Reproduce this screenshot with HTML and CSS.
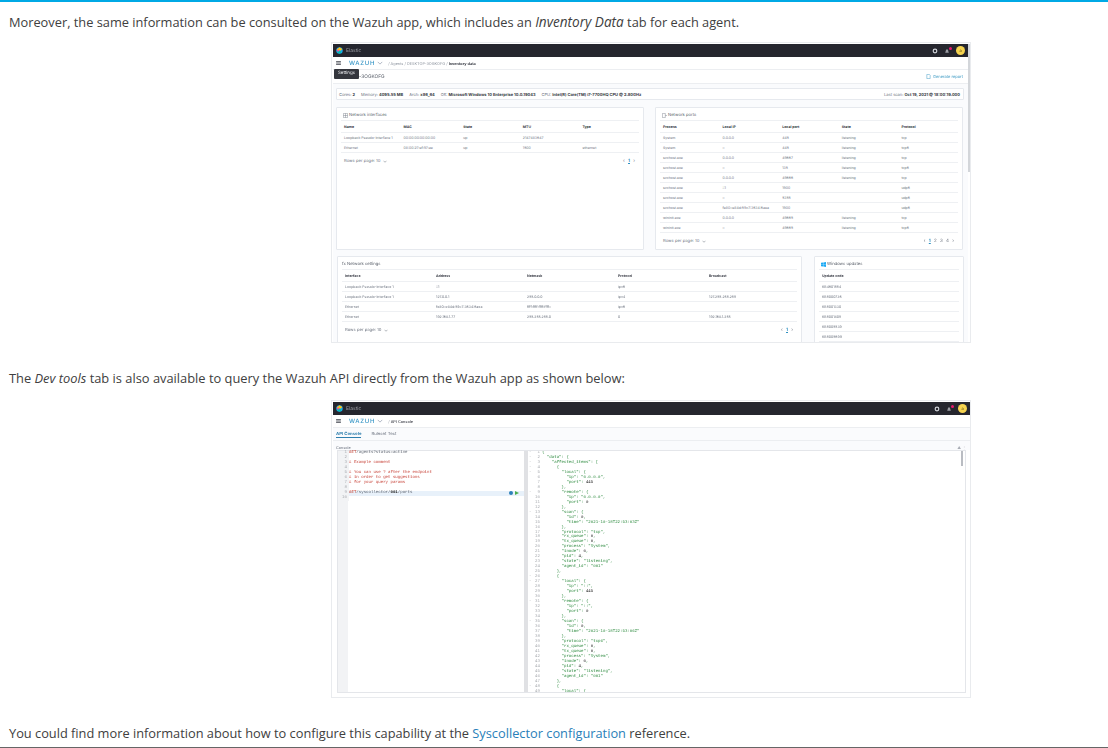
FILE: index.html
```html
<!DOCTYPE html>
<html>
<head>
  <meta charset="UTF-8" />
  <title>Syscollector inventory</title>
  <link rel="stylesheet" href="styles.css">
</head>
<body>
  <div class="topline"></div>
  <main class="doc">
    <p class="lead">Moreover, the same information can be consulted on the Wazuh app, which includes an <em>Inventory Data</em> tab for each agent.</p>

    <!-- inventory data screenshot -->
    <figure class="shot shotInventory">
      <div class="kbnBar">
        <svg class="elasticLogo" viewBox="0 0 10 10"><circle cx="5" cy="5" r="4.6" fill="#1ba9f5"/><path d="M1 3.5 5 .5 9 3 7 5 2 4.5Z" fill="#fec514"/><path d="M1.5 7 3 5.5 7.5 6 8 7.5 5 9.5Z" fill="#00bfb3"/><circle cx="3" cy="5" r="1.6" fill="#f04e98"/></svg>
        <span class="kbnName">Elastic</span>
        <span class="kbnIcons">
          <svg class="kbnIcon" viewBox="0 0 10 10"><circle cx="5" cy="5" r="3" fill="none" stroke="#cfd2d8" stroke-width="2"/></svg>
          <span class="bell"><svg class="kbnIcon" viewBox="0 0 10 10"><path d="M2 8 3.500 3Q5 1 6.500 3L8 8Z" fill="#9a9ca3"/></svg><i class="bellDot"></i></span>
          <span class="avatar">a</span>
        </span>
      </div>
      <div class="wzNav">
        <svg class="burger" viewBox="0 0 6 5"><path d="M0 .5H6M0 2.500H6M0 4.500H6" stroke="#343741"/></svg>
        <span class="wzLogo">WAZUH</span>
        <svg class="chev" viewBox="0 0 8 5"><path d="M1 1 4 4 7 1" fill="none" stroke="#98a2b3"/></svg>
        <span class="crumbs">/ Agents / DESKTOP-3OGKOFG / <b>Inventory data</b></span>
      </div>
      <div class="agentRow">
        <span class="agentName">DESKTOP-3OGKOFG</span>
        <span class="tooltip">Settings</span>
        <span class="report">
          <svg class="reportIcon" viewBox="0 0 6 6"><path d="M1 .5H4L5 1.500V5.500H1Z" fill="none" stroke="#3f9bc4" stroke-width=".6"/></svg>
          Generate report
        </span>
      </div>
      <div class="content">
        <div class="summary">
          <span>Cores: <b>2</b></span>
          <span>Memory: <b>4095.55 MB</b></span>
          <span>Arch: <b>x86_64</b></span>
          <span>OS: <b>Microsoft Windows 10 Enterprise 10.0.19043</b></span>
          <span>CPU: <b>Intel(R) Core(TM) i7-7700HQ CPU @ 2.80GHz</b></span>
          <span class="lastScan">Last scan: <b>Oct 19, 2021 @ 18:00:19.000</b></span>
        </div>
        <div class="cardsTop">
          <section class="card">
            <h3 class="cardTitle"><svg class="cardIcon" viewBox="0 0 6 6"><path d="M.5.500H5.500V5.500H.5ZM.5 3H5.500M3 .5V5.500" fill="none" stroke="#69707d" stroke-width=".5"/></svg>Network interfaces</h3>
            <table class="tbl">
              <tr><th>Name</th><th>MAC</th><th>State</th><th>MTU</th><th>Type</th></tr>
              <tr><td>Loopback Pseudo-Interface 1</td><td>00:00:00:00:00:00</td><td>up</td><td>2147483647</td><td></td></tr>
              <tr><td>Ethernet</td><td>08:00:27:ef:97:ae</td><td>up</td><td>1500</td><td>ethernet</td></tr>
            </table>
            <div class="tblFoot"><span class="rowsPer">Rows per page: 10 <svg class="chev chevSmall" viewBox="0 0 8 5"><path d="M1 1 4 4 7 1" fill="none" stroke="#69707d"/></svg></span><span class="pager">&lsaquo; <u>1</u> &rsaquo;</span></div>
          </section>
          <section class="card">
            <h3 class="cardTitle"><svg class="cardIcon" viewBox="0 0 6 6"><path d="M.5.500H4V5.500H.5ZM4 3H6" fill="none" stroke="#69707d" stroke-width=".5"/></svg>Network ports</h3>
            <table class="tbl">
              <tr><th>Process</th><th>Local IP</th><th>Local port</th><th>State</th><th>Protocol</th></tr>
              <tr><td>System</td><td>0.0.0.0</td><td>445</td><td>listening</td><td>tcp</td></tr>
              <tr><td>System</td><td>::</td><td>445</td><td>listening</td><td>tcp6</td></tr>
              <tr><td>svchost.exe</td><td>0.0.0.0</td><td>49667</td><td>listening</td><td>tcp</td></tr>
              <tr><td>svchost.exe</td><td>::</td><td>135</td><td>listening</td><td>tcp6</td></tr>
              <tr><td>svchost.exe</td><td>0.0.0.0</td><td>49666</td><td>listening</td><td>tcp</td></tr>
              <tr><td>svchost.exe</td><td>::1</td><td>1900</td><td></td><td>udp6</td></tr>
              <tr><td>svchost.exe</td><td>::</td><td>5355</td><td></td><td>udp6</td></tr>
              <tr><td>svchost.exe</td><td>fe80::e84d:59c7:3634:6aea</td><td>1900</td><td></td><td>udp6</td></tr>
              <tr><td>wininit.exe</td><td>0.0.0.0</td><td>49665</td><td>listening</td><td>tcp</td></tr>
              <tr><td>wininit.exe</td><td>::</td><td>49665</td><td>listening</td><td>tcp6</td></tr>
            </table>
            <div class="tblFoot"><span class="rowsPer">Rows per page: 10 <svg class="chev chevSmall" viewBox="0 0 8 5"><path d="M1 1 4 4 7 1" fill="none" stroke="#69707d"/></svg></span><span class="pager">&lsaquo; <u>1</u> 2 3 4 &rsaquo;</span></div>
          </section>
        </div>
        <div class="cardsBottom">
          <section class="card">
            <h3 class="cardTitle">fx Network settings</h3>
            <table class="tbl">
              <tr><th>Interface</th><th>Address</th><th>Netmask</th><th>Protocol</th><th>Broadcast</th></tr>
              <tr><td>Loopback Pseudo-Interface 1</td><td>::1</td><td></td><td>ipv6</td><td></td></tr>
              <tr><td>Loopback Pseudo-Interface 1</td><td>127.0.0.1</td><td>255.0.0.0</td><td>ipv4</td><td>127.255.255.255</td></tr>
              <tr><td>Ethernet</td><td>fe80::e84d:59c7:3634:6aea</td><td>ffff:ffff:ffff:ffff::</td><td>ipv6</td><td></td></tr>
              <tr><td>Ethernet</td><td>192.168.1.77</td><td>255.255.255.0</td><td>0</td><td>192.168.1.255</td></tr>
            </table>
            <div class="tblFoot"><span class="rowsPer">Rows per page: 10 <svg class="chev chevSmall" viewBox="0 0 8 5"><path d="M1 1 4 4 7 1" fill="none" stroke="#69707d"/></svg></span><span class="pager">&lsaquo; <u>1</u> &rsaquo;</span></div>
          </section>
          <section class="card">
            <h3 class="cardTitle"><svg class="cardIcon" viewBox="0 0 6 6"><path d="M0 1 2.700.6V2.800H0ZM3 .5 6 0V2.800H3ZM0 3.100H2.700V5.400L0 5ZM3 3.100H6V6L3 5.500Z" fill="#1ba9f5"/></svg>Windows updates</h3>
            <table class="tbl">
              <tr><th>Update code</th></tr>
              <tr><td>KB4601554</td></tr>
              <tr><td>KB5000736</td></tr>
              <tr><td>KB5001330</td></tr>
              <tr><td>KB5001405</td></tr>
              <tr><td>KB5005539</td></tr>
              <tr><td>KB5005699</td></tr>
            </table>
          </section>
        </div>
      </div>
      <i class="pageScroll"></i>
    </figure>

    <p class="afterShot">The <em>Dev tools</em> tab is also available to query the Wazuh API directly from the Wazuh app as shown below:</p>

    <!-- dev tools screenshot -->
    <figure class="shot shotConsole">
      <div class="kbnBar">
        <svg class="elasticLogo" viewBox="0 0 10 10"><circle cx="5" cy="5" r="4.6" fill="#1ba9f5"/><path d="M1 3.500 5 .5 9 3 7 5 2 4.500Z" fill="#fec514"/><path d="M1.500 7 3 5.500 7.500 6 8 7.500 5 9.500Z" fill="#00bfb3"/><circle cx="3" cy="5" r="1.600" fill="#f04e98"/></svg>
        <span class="kbnName">Elastic</span>
        <span class="kbnIcons">
          <svg class="kbnIcon" viewBox="0 0 10 10"><circle cx="5" cy="5" r="3" fill="none" stroke="#cfd2d8" stroke-width="2"/></svg>
          <span class="bell"><svg class="kbnIcon" viewBox="0 0 10 10"><path d="M2 8 3.500 3Q5 1 6.500 3L8 8Z" fill="#9a9ca3"/></svg><i class="bellDot"></i></span>
          <span class="avatar">a</span>
        </span>
      </div>
      <div class="wzNav">
        <svg class="burger" viewBox="0 0 6 5"><path d="M0 .5H6M0 2.500H6M0 4.500H6" stroke="#343741"/></svg>
        <span class="wzLogo">WAZUH</span>
        <svg class="chev" viewBox="0 0 8 5"><path d="M1 1 4 4 7 1" fill="none" stroke="#98a2b3"/></svg>
        <span class="crumbs">/ <b class="crumbPlain">API Console</b></span>
      </div>
      <div class="tabs">
        <span class="tab tabActive">API Console</span>
        <span class="tab">Ruleset Test</span>
      </div>
      <div class="consoleHead">
        <span>Console</span>
        <span class="consoleTools">&#9650; &#8942;</span>
      </div>
      <div class="editor">
        <div class="pane paneLeft">
          <div class="edLine"><span class="num">1</span><span class="get">GET</span> <span class="path">/agents?status=active</span></div>
          <div class="edLine"><span class="num">2</span></div>
          <div class="edLine"><span class="num">3</span><span class="cmt"># Example comment</span></div>
          <div class="edLine"><span class="num">4</span></div>
          <div class="edLine"><span class="num">5</span><span class="cmt"># You can use ? after the endpoint</span></div>
          <div class="edLine"><span class="num">6</span><span class="cmt"># in order to get suggestions</span></div>
          <div class="edLine"><span class="num">7</span><span class="cmt"># for your query params</span></div>
          <div class="edLine"><span class="num">8</span></div>
          <div class="edLine edActive"><span class="num">9</span><span class="get">GET</span> <span class="path">/syscollector/<b>001</b>/ports</span>
            <span class="runIcons"><i class="wrench"></i><i class="play"></i></span>
          </div>
          <div class="edLine"><span class="num">10</span></div>
        </div>
        <div class="pane paneRight">
<pre class="fold">-
-
-
-
-



-



-












-
-



-



-












-</pre>
<pre class="gutter">1
2
3
4
5
6
7
8
9
10
11
12
13
14
15
16
17
18
19
20
21
22
23
24
25
26
27
28
29
30
31
32
33
34
35
36
37
38
39
40
41
42
43
44
45
46
47
48
49</pre>
<pre class="json">{
  "data": {
    "affected_items": [
      {
        "local": {
          "ip": "0.0.0.0",
          "port": <b>445</b>
        },
        "remote": {
          "ip": "0.0.0.0",
          "port": <b>0</b>
        },
        "scan": {
          "id": <b>0</b>,
          "time": "2021-10-18T22:53:03Z"
        },
        "protocol": "tcp",
        "rx_queue": <b>0</b>,
        "tx_queue": <b>0</b>,
        "process": "System",
        "inode": <b>0</b>,
        "pid": <b>4</b>,
        "state": "listening",
        "agent_id": "001"
      },
      {
        "local": {
          "ip": "::",
          "port": <b>445</b>
        },
        "remote": {
          "ip": "::",
          "port": <b>0</b>
        },
        "scan": {
          "id": <b>0</b>,
          "time": "2021-10-18T22:53:06Z"
        },
        "protocol": "tcp6",
        "rx_queue": <b>0</b>,
        "tx_queue": <b>0</b>,
        "process": "System",
        "inode": <b>0</b>,
        "pid": <b>4</b>,
        "state": "listening",
        "agent_id": "001"
      },
      {
        "local": {</pre>
          <i class="editorScroll"></i>
        </div>
      </div>
    </figure>

    <p class="afterShot lastPara">You could find more information about how to configure this capability at the <a href="#">Syscollector configuration</a> reference.</p>
  </main>
  <hr class="endRule">
</body>
</html>
```

FILE: styles.css
```css
html, body {
  margin: 0;
  height: 748px;
  overflow: hidden;
  background-color: #fff;
}

body {
  font-family: "Open Sans", sans-serif;
  font-size: 12.870px;
  color: #404040;
}

.topline {
  height: 2px;
  background-color: #00a9e5;
}

.doc {
  padding: 0 9px;
}

.doc p {
  margin: 10px 0;
  line-height: 20px;
}

.doc .lead {
  font-size: 12.800px;
}

.doc .lead em {
  font-size: 13.600px;
}

.doc .afterShot {
  margin-top: 25px;
  margin-bottom: 12px;
}

.doc .lastPara {
  margin-bottom: 0;
  font-size: 12.800px;
}

.doc a {
  color: #2980b9;
  text-decoration: none;
}

.endRule {
  margin: 4px 0 0;
  border: none;
  border-top: 1px solid #666;
}

/* screenshots */
.shot {
  box-sizing: border-box;
  position: relative;
  display: flex;
  flex-direction: column;
  width: 640px;
  margin: 0 0 0 322px;
  padding: 1px 2px 0 1px;
  border: 1px solid #e9ebee;
  overflow: hidden;
  font-family: Inter, sans-serif;
  font-size: 4px;
  color: #69707d;
  background-color: #fff;
  text-rendering: geometricPrecision;
}

.shotInventory {
  height: 301px;
}

.shotConsole {
  height: 298px;
  padding-right: 0;
}

.shot > * {
  filter: blur(0.3px);
}

.kbnBar {
  flex: none;
  display: flex;
  align-items: center;
  height: 13px;
  padding: 0 3px;
  background-color: #25262e;
  color: #9a9ca3;
  font-size: 5px;
}

.elasticLogo {
  width: 7px;
  height: 7px;
  margin-right: 3px;
}

.kbnIcons {
  margin-left: auto;
  display: flex;
  align-items: center;
  gap: 6px;
}

.kbnIcon {
  display: block;
  width: 6px;
  height: 6px;
}

.bell {
  position: relative;
}

.bellDot {
  position: absolute;
  top: -1px;
  right: -2px;
  width: 3px;
  height: 3px;
  border-radius: 50%;
  background-color: #e6186d;
}

.avatar {
  width: 9px;
  height: 9px;
  border-radius: 50%;
  background-color: #f5d34f;
  color: #5a4a10;
  font-size: 4px;
  line-height: 9px;
  text-align: center;
}

.wzNav {
  flex: none;
  display: flex;
  align-items: center;
  height: 13px;
  padding-left: 3px;
  border-bottom: 1px solid #eceef1;
  box-sizing: border-box;
}

.burger {
  width: 5px;
  height: 4px;
  margin-right: 8px;
}

.wzLogo {
  color: #3595c6;
  font-size: 6px;
  font-weight: 500;
  letter-spacing: 0.7px;
}

.chev {
  width: 6px;
  height: 4px;
  margin: 0 5px 0 2px;
}

.chevSmall {
  width: 4px;
  height: 3px;
  margin: 0 0 0 1px;
}

.crumbs {
  font-size: 3.850px;
  color: #8a919c;
  white-space: nowrap;
}

.crumbs b {
  color: #343741;
}

.crumbs .crumbPlain {
  font-weight: 500;
}

.agentRow {
  flex: none;
  position: relative;
  z-index: 2;
  display: flex;
  align-items: center;
  height: 14px;
  padding: 0 5px 0 4px;
  border-bottom: 1px solid #eceef1;
  box-sizing: border-box;
}

.agentName {
  font-size: 4.800px;
  color: #555b66;
}

.tooltip {
  position: absolute;
  top: -1px;
  left: 1px;
  width: 25px;
  height: 10px;
  border-radius: 1px;
  background-color: #34363d;
  color: #e6e7ea;
  font-size: 4.500px;
  line-height: 10px;
  text-align: center;
}

.report {
  margin-left: auto;
  color: #3f9bc4;
  display: flex;
  align-items: center;
  gap: 2px;
}

.reportIcon {
  width: 5px;
  height: 5px;
}

.content {
  flex: 1;
  min-height: 0;
  padding: 4px 3px 0;
  background-color: #fafbfd;
}

.summary {
  display: flex;
  align-items: center;
  gap: 6px;
  box-sizing: border-box;
  width: 628px;
  height: 12px;
  padding: 0 3px 0 2px;
  margin-bottom: 7px;
  border: 1px solid #e6e9ee;
  border-radius: 1px;
  background-color: #fff;
  font-size: 4px;
  white-space: nowrap;
}

.summary b {
  color: #343741;
}

.lastScan {
  margin-left: auto;
}

.cardsTop {
  display: grid;
  grid-template-columns: 308px 308px;
  gap: 11px;
  height: 141px;
  margin-bottom: 8px;
}

.cardsBottom {
  display: grid;
  grid-template-columns: 465px 150px;
  gap: 12px;
  height: 120px;
  padding-left: 1px;
}

.card {
  box-sizing: border-box;
  padding: 0 4px;
  border: 1px solid #e6e9ee;
  border-radius: 1px;
  background-color: #fff;
}

.cardTitle {
  box-sizing: border-box;
  display: flex;
  align-items: center;
  gap: 1px;
  margin: 0;
  height: 13px;
  padding-top: 2px;
  font-size: 4.200px;
  font-weight: normal;
  color: #555b66;
  border-bottom: 1px solid #eef0f3;
}

.cardIcon {
  width: 5px;
  height: 5px;
  margin-left: 2px;
}

.tbl {
  width: 100%;
  table-layout: fixed;
  border-collapse: collapse;
  font-size: 3.500px;
}

.tbl th, .tbl td {
  padding: 0 0 0 3px;
  text-align: left;
  white-space: nowrap;
  border-bottom: 1px solid #eef0f3;
}

.tbl th {
  height: 11px;
  color: #343741;
  font-weight: 700;
}

.tbl td {
  height: 9px;
}

.tblFoot {
  display: flex;
  justify-content: space-between;
  align-items: center;
  height: 16px;
  padding: 0 4px 0 3px;
  font-size: 4.200px;
}

.rowsPer {
  display: flex;
  align-items: center;
  gap: 2px;
}

.pager {
  font-size: 4.500px;
  word-spacing: 2px;
}

.pager u {
  color: #2c8fc0;
  font-weight: 700;
}

.pageScroll {
  position: absolute;
  top: 1px;
  right: 0;
  width: 2px;
  height: 128px;
  background-color: #d3d6da;
}

/* dev tools */
.tabs {
  flex: none;
  display: flex;
  align-items: flex-start;
  gap: 10px;
  height: 13px;
  padding-left: 3px;
  box-sizing: border-box;
  background-color: #fafbfd;
  border-bottom: 1px solid #eceef1;
  font-size: 4.300px;
}

.tab {
  box-sizing: border-box;
  display: flex;
  align-items: center;
  height: 10px;
  padding-top: 3px;
}

.tabActive {
  color: #2f7fae;
  font-weight: 700;
  border-bottom: 1px solid #2f7fae;
}

.consoleHead {
  flex: none;
  display: flex;
  justify-content: space-between;
  align-items: flex-end;
  height: 9px;
  padding: 0 4px 0 3px;
  background-color: #fafbfd;
  font-size: 3.800px;
}

.consoleTools {
  color: #a9adb5;
}

.editor {
  flex: none;
  display: flex;
  height: 243px;
  margin: 0 4px 0 4px;
  border: 1px solid #e4e6ea;
  box-sizing: border-box;
  background-color: #fff;
  font-family: "Liberation Mono", monospace;
  font-size: 4.070px;
  line-height: 4.970px;
}

.pane {
  height: 100%;
}

.paneLeft {
  width: 186px;
  flex: none;
  background: linear-gradient(to right, #f2f3f5 10px, #fff 10px);
  border-right: 4px solid #e0e1e4;
}

.edLine {
  display: flex;
  height: 4.970px;
  white-space: pre;
}

.edActive {
  background-color: #e8f1fa;
  align-items: center;
}

.num {
  box-sizing: border-box;
  flex: none;
  width: 11px;
  padding-right: 2px;
  color: #a6a9ae;
  text-align: right;
  background-color: #f2f3f5;
}

.get {
  color: #c0392b;
}

.path {
  color: #5f6672;
}

.path b {
  color: #2a2a2a;
}

.cmt {
  color: #c8453b;
}

.runIcons {
  margin-left: auto;
  margin-right: 5px;
  display: flex;
  align-items: center;
  gap: 2px;
}

.wrench {
  width: 4px;
  height: 4px;
  border-radius: 50%;
  background-color: #2c80b9;
}

.play {
  width: 0;
  height: 0;
  border-left: 4px solid #4caf50;
  border-top: 2px solid transparent;
  border-bottom: 2px solid transparent;
}

.paneRight {
  flex: 1;
  position: relative;
  display: flex;
  overflow: hidden;
  box-sizing: border-box;
}

.paneRight pre {
  margin: 0;
  font: inherit;
}

.fold {
  width: 5px;
  padding-left: 1px;
  color: #9a9da3;
}

.gutter {
  width: 6px;
  padding-right: 2px;
  color: #a6a9ae;
  text-align: right;
}

.json {
  color: #2c8a3e;
}

.json b {
  color: #222;
  font-weight: normal;
}

.editorScroll {
  position: absolute;
  top: 0;
  right: 2px;
  width: 2px;
  height: 15px;
  background-color: #b9bcc2;
}
```
